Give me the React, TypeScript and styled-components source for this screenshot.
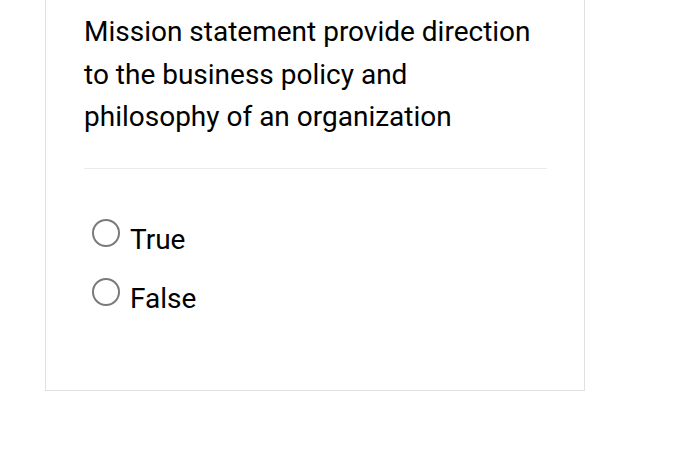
import styled, { createGlobalStyle } from "styled-components";

const GlobalStyle = createGlobalStyle`
  body {
    margin: 0;
    background: #ffffff;
    font-family: Roboto, "Liberation Sans", sans-serif;
    color: #000000;
  }
  * {
    box-sizing: border-box;
  }
`

const options = ["True", "False"]

export default function App() {
    return (
        <Page>
            <GlobalStyle />
            <Card>
                <Question>
                    Mission statement provide direction to the business policy and
                    philosophy of an organization
                </Question>
                <Divider />
                <Options>
                    {options.map((option) => (
                        <Option key={option}>
                            <Radio type="radio" name="answer" />
                            <Label>{option}</Label>
                        </Option>
                    ))}
                </Options>
            </Card>
        </Page>
    )
}

const Page = styled.div`
  padding-left: 45px;
`

const Card = styled.div`
  width: 540px;
  height: 391px;
  border: 1px solid #e0e0e0;
  border-top: none;
  padding: 11px 37px 0 38px;
  background: #ffffff;
`

const Question = styled.div`
  font-size: 28px;
  line-height: 42.7px;
  width: 455px;
`

const Divider = styled.div`
  height: 1px;
  background: #ebebeb;
  margin-top: 29px;
  width: 463px;
`

const Options = styled.div`
  display: flex;
  flex-direction: column;
  gap: 31px;
  padding-top: 50px;
  padding-left: 8px;
`

const Option = styled.label`
  display: flex;
  align-items: flex-start;
  gap: 10px;
  height: 28px;
`

const Radio = styled.input`
  appearance: none;
  margin: 0;
  flex: none;
  width: 28px;
  height: 28px;
  border: 2px solid #7a7a7a;
  border-radius: 50%;
`

const Label = styled.span`
  font-size: 28px;
  line-height: 30px;
  margin-top: 6px;
`
